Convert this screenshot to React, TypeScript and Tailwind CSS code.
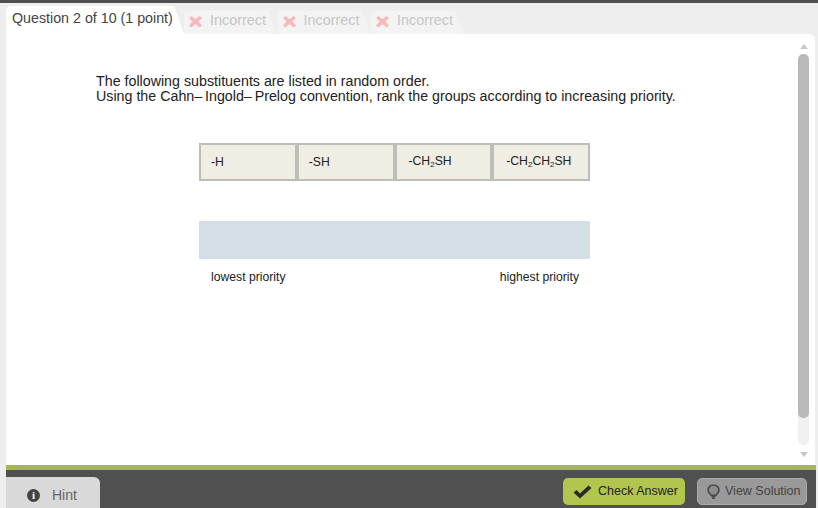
const font = "font-['Liberation_Sans',Arial,sans-serif]";

const XMark = () => (
  <svg width="15" height="13" viewBox="0 0 15 13" className="shrink-0">
    <path d="M1 3 L3.5 1 L7.5 4 L11.5 1 L14 3 L10.5 6.5 L14 10.5 L11.5 12.5 L7.5 9 L3.5 12.5 L1 10.5 L4.5 6.5 Z" fill="#f6b9bd" />
  </svg>
);

const IncorrectTab = () => (
  <div className="flex items-center gap-[7px] h-[23px] w-[93.5px] pl-[4px] pb-[3px] bg-[#f3f3f3] rounded-tl-[4px] text-[14.4px] text-[#c6c6c6] [clip-path:polygon(0_0,84px_0,93px_100%,0_100%)]">
    <XMark />
    <span>Incorrect</span>
  </div>
);

const Tile = ({ children, pad = "pl-[10px] pt-[9px]" }: { children: React.ReactNode; pad?: string }) => (
  <div className={`h-[38px] border-2 border-[#bdbdb9] bg-[#f0eee2] ${pad} text-[12.2px] leading-[16px] text-[#222]`}>
    {children}
  </div>
);

const Sub = ({ children }: { children: React.ReactNode }) => (
  <sub className="text-[8px] leading-none align-baseline relative top-[2px]">{children}</sub>
);

export default function App() {
  return (
    <div className={`${font} w-[818px] h-[508px] overflow-hidden flex flex-col bg-[#eeeeee] border-t-[3px] border-[#4f4f4f]`}>
      <div className="flex items-end h-[31px] pl-[6px] shrink-0">
        <div className="w-[178px] h-[28px] pl-[6px] pt-[2px] bg-white rounded-tl-[5px] text-[14.25px] text-[#444] [clip-path:polygon(0_0,168px_0,178px_100%,0_100%)]">
          Question 2 of 10 (1 point)
        </div>
        <IncorrectTab />
        <IncorrectTab />
        <IncorrectTab />
      </div>

      <div className="ml-[6px] mr-[3px] flex-1 min-h-0 flex bg-white rounded-tr-[6px]">
        <div className="flex-1 pl-[90px] pt-[40px]">
          <p className="text-[14.25px] leading-[15px] text-[#222]">
            The following substituents are listed in random order.
            <br />
            Using the Cahn–{"\u2009"}Ingold–{"\u2009"}Prelog convention, rank the groups according to increasing priority.
          </p>
          <div className="mt-[39px] ml-[103px] w-[391px] grid grid-cols-4">
            <Tile>-H</Tile>
            <Tile>-SH</Tile>
            <Tile pad="pl-[12px] pt-[8px]">
              -CH<Sub>2</Sub>SH
            </Tile>
            <Tile pad="pl-[12px] pt-[8px]">
              -CH<Sub>2</Sub>CH<Sub>2</Sub>SH
            </Tile>
          </div>
          <div className="mt-[40px] ml-[103px] w-[391px] h-[38px] bg-[#d3dfe5]" />
          <div className="mt-[10px] ml-[103px] w-[391px] pl-[12px] pr-[11px] flex justify-between text-[12.2px] leading-[16px] text-[#222]">
            <span>lowest priority</span>
            <span>highest priority</span>
          </div>
        </div>
        <div className="w-[23px] shrink-0 flex flex-col items-center pt-[10px] pb-[8px]">
          <div className="w-0 h-0 border-x-[4px] border-x-transparent border-b-[5px] border-b-[#c8c8c8]" />
          <div className="mt-[5px] w-[11px] flex-1 rounded-[5px] bg-[#f0f0f0] overflow-hidden">
            <div className="h-[364px] bg-[#b9b9b9] rounded-[5px]" />
          </div>
          <div className="mt-[7px] w-0 h-0 border-x-[4px] border-x-transparent border-t-[5px] border-t-[#c8c8c8]" />
        </div>
      </div>

      <div className="ml-[6px] mr-[2px] h-[5px] shrink-0 bg-[#a3b851]" />
      <div className="ml-[6px] mr-[2px] h-[38px] shrink-0 flex items-end justify-between bg-[#505050]">
        <div className="w-[94px] h-[31px] bg-[#d9d9d9] rounded-tr-[6px] flex items-center pl-[21px] pt-[5px] gap-[12px] text-[14px] text-[#666]">
          <span className="w-[13px] h-[13px] rounded-full bg-[#444] text-white text-[11px] leading-[13px] text-center font-bold font-['Liberation_Serif',serif]">i</span>
          <span>Hint</span>
        </div>
        <div className="flex gap-[12px] pr-[9px] pb-[3px]">
          <div className="w-[122px] h-[27px] rounded-[5px] bg-[#b2c64d] flex items-center pl-[10px] gap-[6px] text-[12.5px] text-[#222]">
            <svg width="19" height="14" viewBox="0 0 19 14" className="shrink-0">
              <path d="M0.5 7.5 L3.5 5 L7 8.5 L15.5 0.5 L18.5 3 L7 13.5 Z" fill="#2a2a2a" />
            </svg>
            <span>Check Answer</span>
          </div>
          <div className="w-[110px] h-[27px] rounded-[5px] bg-[#999999] border border-[#aaa] flex items-center pl-[9px] gap-[5px] text-[12.5px] text-[#444]">
            <svg width="13" height="15" viewBox="0 0 13 15" className="shrink-0">
              <path d="M6.5 1 C3.4 1 1 3.2 1 6 C1 8 2.4 9 3.4 10.4 L4 11.2 H9 L9.6 10.4 C10.6 9 12 8 12 6 C12 3.2 9.6 1 6.5 1 Z" fill="#8c8c8c" stroke="#484848" strokeWidth="1.6" />
              <path d="M4.5 12.5 H8.5 M5.2 14.2 H7.8" stroke="#484848" strokeWidth="1.4" fill="none" />
            </svg>
            <span>View Solution</span>
          </div>
        </div>
      </div>
    </div>
  );
}
